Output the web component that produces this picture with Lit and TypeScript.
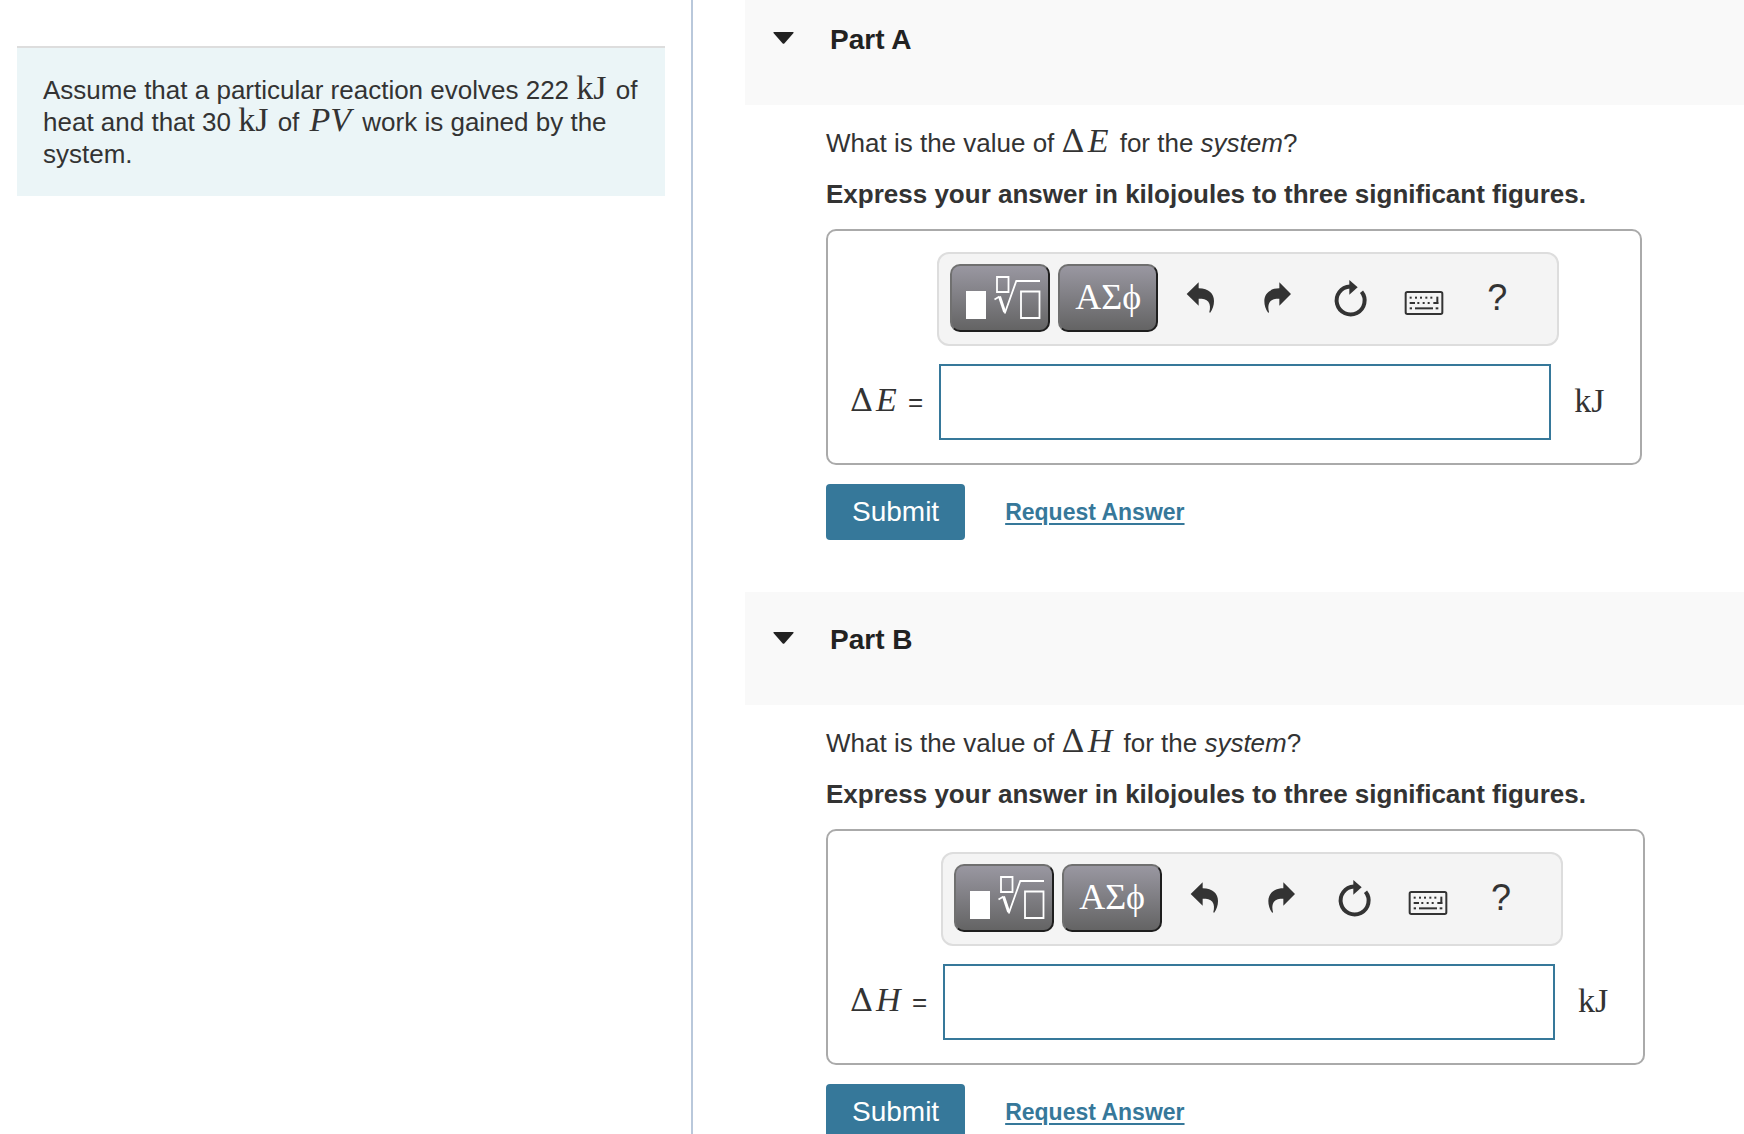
import { LitElement, html, svg, css } from "lit";
import { customElement, property } from "lit/decorators.js";

const undoIcon = html`<svg viewBox="1035 117 222 204" aria-hidden="true">
  <path d="M1103 207L1139 172V190C1170 190 1185 207 1185 228C1185 241 1181 254 1173 264C1172 263 1172 262 1171 261C1174 250 1174 238 1168 230C1162 222 1152 221 1139 221V242Z" />
</svg>`;

const redoIcon = html`<svg viewBox="-3 117 222 204" aria-hidden="true">
  <path d="M156 207L121 172V190C92 190 76 207 76 228C76 241 80 254 88 264C89 263 89 262 90 261C87 250 87 238 93 230C99 222 108 221 121 221V242Z" />
</svg>`;

const resetIcon = html`<svg viewBox="219 117 222 204" aria-hidden="true">
  <path class="ring" d="M367.500 200A42 42 0 1 1 333 184.500" />
  <path d="M331 165L356 187L331 209Z" />
</svg>`;

const keys: Array<[number, number, number, number]> = [
  [512, 215, 6, 6], [528, 215, 6, 6], [543, 215, 6, 6], [559, 215, 6, 6], [574, 215, 6, 6],
  [512, 231, 16, 6], [535, 231, 6, 6], [551, 231, 6, 6], [566, 231, 6, 6],
  [583, 231, 15, 6], [592, 215, 6, 22],
  [512, 247, 7, 6], [528, 247, 54, 6], [590, 247, 8, 6],
];

const keyboardIcon = html`<svg viewBox="441 117 222 204" aria-hidden="true">
  <rect class="frame" x="500" y="201" width="110" height="66" rx="5" />
  ${keys.map(([x, y, w, h]) => svg`<rect x=${x} y=${y} width=${w} height=${h} />`)}
</svg>`;

const templateIcon = html`<svg class="templates" viewBox="2 2 96 64" aria-hidden="true">
  <rect class="solid" x="16" y="27" width="20" height="28" />
  <path d="M47 13H58.500V28H47Z" />
  <path d="M44.500 35.500L49.500 32.500" />
  <path class="thick" d="M49.500 32.500L54.700 48" />
  <path d="M54.700 49.500L66.300 17H90" />
  <path d="M71 27.500H89.500V54H71Z" />
</svg>`;

@customElement("problem-part")
class ProblemPart extends LitElement {
  @property() letter = "A";
  @property() symbol = "E";

  static styles = css`
    :host {
      display: block;
      color: #333;
    }
    .header {
      display: flex;
      align-items: flex-start;
      gap: 36px;
      box-sizing: border-box;
      height: 113px;
      padding: 32px 28px 0;
      background: #f9f9f9;
    }
    .toggle {
      display: flex;
      align-items: center;
      height: 28px;
      padding: 0;
      border: 0;
      background: none;
    }
    .toggle svg {
      width: 21px;
      height: 12px;
      fill: #222;
    }
    .title {
      margin: 0;
      font-size: 28px;
      line-height: 32px;
      color: #222;
    }
    .body {
      display: flex;
      flex-direction: column;
      align-items: flex-start;
      gap: 19px;
      padding: 22px 81px 52px;
    }
    .text {
      margin: 0;
      font-size: 26px;
      line-height: 32px;
    }
    .strong {
      font-weight: bold;
    }
    .math {
      font-family: "Liberation Serif", serif;
      font-size: 34px;
      line-height: 24px;
      white-space: nowrap;
    }
    .delta {
      font-family: "DejaVu Serif", serif;
      font-size: 32px;
    }
    .math i {
      margin: 0 4px 0 3px;
    }
    .answer {
      display: grid;
      grid-template-columns: auto auto auto;
      align-items: center;
      row-gap: 18px;
      padding: 21px 35px 23px 22px;
      border: 2px solid #aaa;
      border-radius: 10px;
    }
    .toolbar {
      grid-column: 2;
      grid-row: 1;
      display: flex;
      box-sizing: border-box;
      width: 622px;
      padding: 10px 11px 12px;
      border: 2px solid #ddd;
      border-radius: 12px;
      background: #f4f4f4;
    }
    .pad {
      box-sizing: border-box;
      width: 100px;
      height: 68px;
      margin-right: 8px;
      padding: 0;
      border: 2px solid;
      border-color: #707070 #1e1e1e #1e1e1e #707070;
      border-radius: 10px;
      background: linear-gradient(#9b99a3, #626262);
      background-origin: border-box;
      color: #fff;
      font-family: "Liberation Serif", serif;
      font-size: 36px;
      line-height: 56px;
    }
    .greek {
      margin-right: 6px;
      padding-bottom: 2px;
    }
    .templates {
      display: block;
      width: 96px;
      height: 64px;
      fill: none;
      stroke: #fff;
      stroke-width: 1.8;
    }
    .templates .solid {
      fill: #fff;
      stroke: none;
    }
    .templates .thick {
      stroke-width: 3;
    }
    .tool {
      width: 74px;
      height: 68px;
      padding: 0;
      border: 0;
      background: none;
      color: #333;
      font-family: "Liberation Sans", Arial, sans-serif;
      font-size: 36px;
    }
    .tool svg {
      display: block;
      width: 74px;
      height: 68px;
      fill: #333;
    }
    .tool .ring {
      fill: none;
      stroke: #333;
      stroke-width: 12;
    }
    .tool .frame {
      fill: none;
      stroke: #333;
      stroke-width: 6;
    }
    .label {
      grid-column: 1;
      grid-row: 2;
      padding-right: 14px;
      font-size: 26px;
      line-height: 32px;
    }
    .entry {
      grid-column: 2;
      grid-row: 2;
      box-sizing: border-box;
      width: 612px;
      height: 76px;
      margin: 0 0 0 2px;
      padding: 0 16px;
      border: 2px solid #36789a;
      border-radius: 0;
      background: #fff;
      font-size: 28px;
      outline: none;
    }
    .unit {
      grid-column: 3;
      grid-row: 2;
      margin-left: 15px;
      padding-bottom: 2px;
    }
    .actions {
      display: flex;
      align-items: center;
      gap: 40px;
    }
    .submit {
      height: 56px;
      padding: 0 26px;
      border: 0;
      border-radius: 4px;
      background: #36789a;
      color: #fff;
      font-family: "Liberation Sans", Arial, sans-serif;
      font-size: 28px;
    }
    .request {
      color: #36789a;
      font-size: 23px;
      font-weight: bold;
      text-underline-offset: 3px;
      text-decoration-thickness: 2px;
    }
  `;

  render() {
    const quantity = html`<span class="math"><span class="delta">Δ</span><i>${this.symbol}</i></span>`;
    return html`
      <header class="header">
        <button class="toggle" aria-label="Collapse Part ${this.letter}">
          <svg viewBox="0 0 21 12"><path d="M1 0H20Q21 0 20.500 1L11.500 11.200Q10.500 12.200 9.500 11.200L.5 1Q0 0 1 0Z" /></svg>
        </button>
        <h2 class="title">Part ${this.letter}</h2>
      </header>
      <div class="body">
        <p class="text">What is the value of ${quantity} for the <em>system</em>?</p>
        <p class="text strong">Express your answer in kilojoules to three significant figures.</p>
        <div class="answer">
          <div class="toolbar">
            <button class="pad" aria-label="Templates">${templateIcon}</button>
            <button class="pad greek" aria-label="Symbols">ΑΣϕ</button>
            <button class="tool" aria-label="Undo">${undoIcon}</button>
            <button class="tool" aria-label="Redo">${redoIcon}</button>
            <button class="tool" aria-label="Reset">${resetIcon}</button>
            <button class="tool" aria-label="Keyboard shortcuts">${keyboardIcon}</button>
            <button class="tool" aria-label="Help">?</button>
          </div>
          <label class="label" for="entry">${quantity} =</label>
          <input class="entry" id="entry" type="text" />
          <span class="unit math">kJ</span>
        </div>
        <div class="actions">
          <button class="submit">Submit</button>
          <a class="request" href="#">Request Answer</a>
        </div>
      </div>
    `;
  }
}

@customElement("app-root")
class AppRoot extends LitElement {
  static styles = css`
    :host {
      display: grid;
      grid-template-columns: 693fr 1051fr;
      height: 100vh;
      background: #fff;
      color: #333;
      font-family: "Liberation Sans", Arial, sans-serif;
    }
    .intro {
      padding: 46px 26px 0 17px;
      border-right: 2px solid #b9c8db;
    }
    .card {
      margin: 0;
      padding: 26px 20px 26px 26px;
      border-top: 2px solid #ddd;
      background: #ebf5f7;
      font-size: 26px;
      line-height: 32px;
    }
    .math {
      margin-right: 2px;
      font-family: "Liberation Serif", serif;
      font-size: 34px;
      line-height: 24px;
    }
    i.math {
      margin: 0 4px 0 3px;
    }
    .parts {
      padding-left: 52px;
      overflow-y: auto;
      scrollbar-width: none;
    }
    .first {
      margin-top: -8px;
    }
  `;

  render() {
    return html`
      <aside class="intro">
        <p class="card">
          Assume that a particular reaction evolves 222 <span class="math">kJ</span> of heat and that 30
          <span class="math">kJ</span> of <i class="math">PV</i> work is gained by the system.
        </p>
      </aside>
      <main class="parts">
        <problem-part class="first" letter="A" symbol="E"></problem-part>
        <problem-part letter="B" symbol="H"></problem-part>
      </main>
    `;
  }
}
